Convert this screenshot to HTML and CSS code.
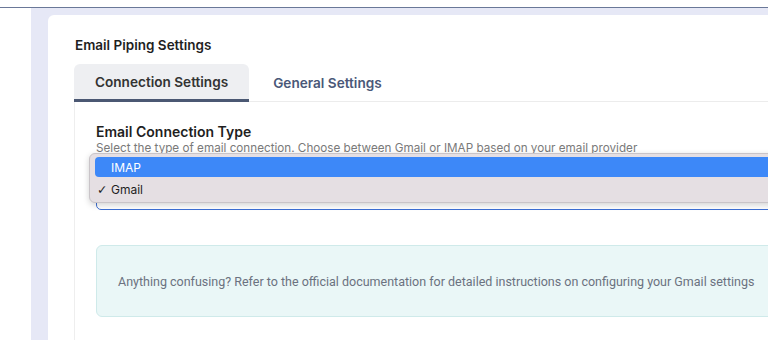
FILE: index.html
```html
<!DOCTYPE html>
<html>
<head>
<meta charset="utf-8">
<link rel="stylesheet" href="styles.css">
</head>
<body>
<div class="topbar"></div>
<div class="layout">
  <div class="sidebar"></div>
  <div class="main">
    <div class="card">
      <h1 class="card-title">Email Piping Settings</h1>
      <div class="tabs">
        <div class="tab tab-active">Connection Settings</div>
        <div class="tab tab-next">General Settings</div>
        <div class="tab-fill"></div>
      </div>
      <div class="panel">
        <div class="field">
          <div class="field-label">Email Connection Type</div>
          <div class="field-help">Select the type of email connection. Choose between Gmail or IMAP based on your email provider</div>
          <div class="select-wrap">
            <div class="select"></div>
            <div class="popup">
              <div class="option option-hl"><span class="check"></span><span>IMAP</span></div>
              <div class="option"><span class="check">✓</span><span>Gmail</span></div>
            </div>
          </div>
        </div>
        <div class="info">Anything confusing? Refer to the official documentation for detailed instructions on configuring your Gmail settings</div>
      </div>
    </div>
  </div>
</div>
</body>
</html>
```

FILE: styles.css
```css
* { box-sizing: border-box; }
html, body { margin: 0; padding: 0; }
body {
  width: 768px;
  height: 340px;
  overflow: hidden;
  background: #ffffff;
  font-family: "Inter", "Liberation Sans", sans-serif;
  color: #222;
}
.topbar {
  height: 8px;
  border-bottom: 1px solid #6a7898;
  background: #ffffff;
}
.layout {
  display: flex;
  height: 332px;
}
.sidebar {
  width: 31px;
  flex: none;
  background: #ffffff;
}
.main {
  flex: none;
  width: 737px;
  overflow: hidden;
  background: #e6e8f6;
  padding: 7px 0 0 17px;
}
.card {
  background: #ffffff;
  border-radius: 6px 0 0 0;
  width: 1000px;
  height: 100%;
  padding: 21px 0 0 26px;
}
.card-title {
  margin: 0 0 10px 1px;
  font-size: 13.5px;
  font-weight: 600;
  line-height: 18px;
  color: #1f1f1f;
}
.tabs {
  display: flex;
  align-items: flex-end;
}
.tab {
  height: 38px;
  padding: 0 21px;
  display: flex;
  align-items: center;
  font-size: 13.6px;
  font-weight: 600;
  color: #4a5878;
  border-bottom: 1px solid #ececec;
}
.tab-next {
  padding-left: 24px;
}
.tab-active {
  background: #eeeff2;
  color: #333333;
  border-radius: 6px 6px 0 0;
  border-bottom: 3px solid #4b5873;
}
.tab-fill {
  flex: 1;
  border-bottom: 1px solid #ececec;
}
.panel {
  border-left: 1px solid #eeeeee;
  padding: 21px 0 0 21px;
  height: 240px;
}
.field-label {
  font-size: 14px;
  font-weight: 600;
  line-height: 18px;
  color: #1f1f1f;
}
.field-help {
  font-size: 11.7px;
  line-height: 14px;
  color: #7a7a7a;
  white-space: nowrap;
}
.select-wrap {
  position: relative;
  margin-top: 17px;
}
.select {
  height: 38px;
  width: 800px;
  border: 1.5px solid #3d6fd4;
  border-radius: 5px;
}
.popup {
  position: absolute;
  left: -7px;
  top: -19px;
  width: 800px;
  background: #e5dfe3;
  border: 1px solid #c9c4c8;
  border-radius: 6px;
  padding: 3px 5px;
  box-shadow: 0 2px 6px rgba(0,0,0,0.18);
  font-size: 12px;
}
.option {
  height: 20px;
  display: flex;
  align-items: center;
  color: #1e1e1e;
  border-radius: 4px;
}
.option-hl {
  background: #3d88f8;
  color: #ffffff;
  margin-bottom: 2px;
}
.check {
  width: 16px;
  padding-left: 2px;
  font-family: "DejaVu Sans", sans-serif;
  font-size: 12.5px;
  flex: none;
}
.info {
  margin-top: 35px;
  width: 800px;
  height: 72px;
  background: #eaf7f7;
  border: 1px solid #cfeaea;
  border-radius: 6px;
  padding: 0 21px;
  display: flex;
  align-items: center;
  font-family: "Roboto", "Liberation Sans", sans-serif;
  font-size: 12.5px;
  color: #6b7280;
  white-space: nowrap;
}
```
